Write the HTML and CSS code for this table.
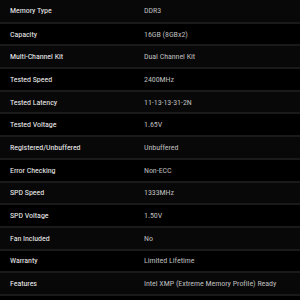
FILE: index.html
```html
<!DOCTYPE html>
<html lang="en">
<head>
  <meta charset="UTF-8" />
  <title>Specifications</title>
  <link rel="stylesheet" href="styles.css">
</head>
<body>
  <table class="spec-table">
    <tr><td class="spec-name">Memory Type</td><td class="spec-value">DDR3</td></tr>
    <tr><td class="spec-name">Capacity</td><td class="spec-value">16GB (8GBx2)</td></tr>
    <tr><td class="spec-name">Multi-Channel Kit</td><td class="spec-value">Dual Channel Kit</td></tr>
    <tr><td class="spec-name">Tested Speed</td><td class="spec-value">2400MHz</td></tr>
    <tr><td class="spec-name">Tested Latency</td><td class="spec-value">11-13-13-31-2N</td></tr>
    <tr><td class="spec-name">Tested Voltage</td><td class="spec-value">1.65V</td></tr>
    <tr><td class="spec-name">Registered/Unbuffered</td><td class="spec-value">Unbuffered</td></tr>
    <tr><td class="spec-name">Error Checking</td><td class="spec-value">Non-ECC</td></tr>
    <tr><td class="spec-name">SPD Speed</td><td class="spec-value">1333MHz</td></tr>
    <tr><td class="spec-name">SPD Voltage</td><td class="spec-value">1.50V</td></tr>
    <tr><td class="spec-name">Fan Included</td><td class="spec-value">No</td></tr>
    <tr><td class="spec-name">Warranty</td><td class="spec-value">Limited Lifetime</td></tr>
    <tr><td class="spec-name">Features</td><td class="spec-value">Intel XMP (Extreme Memory Profile) Ready</td></tr>
  </table>
</body>
</html>
```

FILE: styles.css
```css
body {
  margin: 0;
  background: #000;
  font-family: 'Liberation Sans Narrow', 'Roboto Condensed', 'Liberation Sans', sans-serif;
  color: #e6e6e6;
}

.spec-table {
  width: 100%;
  border-collapse: collapse;
  font-size: 8px;
  letter-spacing: -0.05px;
}

.spec-table tr {
  height: 22.7px;
  border-bottom: 2px solid #1a1a1a;
}

.spec-table tr:nth-child(odd) {
  background: #080808;
}

.spec-table td {
  padding: 0;
  vertical-align: middle;
}

.spec-name {
  width: 134px;
  padding-left: 10px !important;
  color: #f2f2f2;
}

.spec-value {
  color: #bcbcbc;
}
```
